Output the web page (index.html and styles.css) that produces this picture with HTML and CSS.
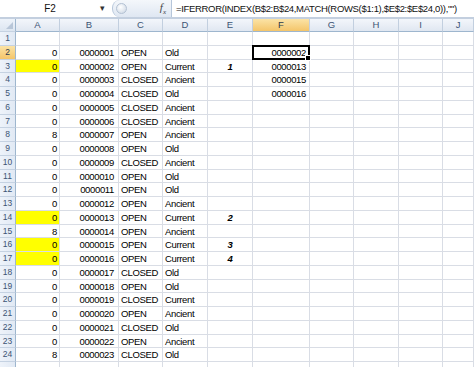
FILE: index.html
```html
<!DOCTYPE html>
<html>
<head>
<meta charset="utf-8">
<link rel="stylesheet" href="styles.css">
</head>
<body>
<div class="app">
  <div class="fbar">
    <div class="namebox">F2</div>
    <div class="dd">&#9662;</div>
    <div class="fxbtn"><span class="knob"></span><span class="fx"><i>f</i><sub>x</sub></span></div>
    <div class="formula">=IFERROR(INDEX(B$2:B$24,MATCH(ROWS($1:1),$E$2:$E$24,0)),"")</div>
  </div>
  <div class="sheet">
    <div class="row hdr"><span class="corner"></span><span>A</span><span>B</span><span>C</span><span>D</span><span>E</span><span class="sel">F</span><span>G</span><span>H</span><span>I</span><span>J</span></div>
    <div class="row"><span>1</span><span></span><span></span><span></span><span></span><span></span><span></span><span></span><span></span><span></span><span></span></div>
    <div class="row"><span class="sel">2</span><span>0</span><span>0000001</span><span>OPEN</span><span>Old</span><span></span><span class="active">0000002</span><span></span><span></span><span></span><span></span></div>
    <div class="row"><span>3</span><span class="hl">0</span><span>0000002</span><span>OPEN</span><span>Current</span><span>1</span><span>0000013</span><span></span><span></span><span></span><span></span></div>
    <div class="row"><span>4</span><span>0</span><span>0000003</span><span>CLOSED</span><span>Ancient</span><span></span><span>0000015</span><span></span><span></span><span></span><span></span></div>
    <div class="row"><span>5</span><span>0</span><span>0000004</span><span>CLOSED</span><span>Old</span><span></span><span>0000016</span><span></span><span></span><span></span><span></span></div>
    <div class="row"><span>6</span><span>0</span><span>0000005</span><span>CLOSED</span><span>Ancient</span><span></span><span></span><span></span><span></span><span></span><span></span></div>
    <div class="row"><span>7</span><span>0</span><span>0000006</span><span>CLOSED</span><span>Ancient</span><span></span><span></span><span></span><span></span><span></span><span></span></div>
    <div class="row"><span>8</span><span>8</span><span>0000007</span><span>OPEN</span><span>Ancient</span><span></span><span></span><span></span><span></span><span></span><span></span></div>
    <div class="row"><span>9</span><span>0</span><span>0000008</span><span>OPEN</span><span>Old</span><span></span><span></span><span></span><span></span><span></span><span></span></div>
    <div class="row"><span>10</span><span>0</span><span>0000009</span><span>CLOSED</span><span>Ancient</span><span></span><span></span><span></span><span></span><span></span><span></span></div>
    <div class="row"><span>11</span><span>0</span><span>0000010</span><span>OPEN</span><span>Old</span><span></span><span></span><span></span><span></span><span></span><span></span></div>
    <div class="row"><span>12</span><span>0</span><span>0000011</span><span>OPEN</span><span>Old</span><span></span><span></span><span></span><span></span><span></span><span></span></div>
    <div class="row"><span>13</span><span>0</span><span>0000012</span><span>OPEN</span><span>Ancient</span><span></span><span></span><span></span><span></span><span></span><span></span></div>
    <div class="row"><span>14</span><span class="hl">0</span><span>0000013</span><span>OPEN</span><span>Current</span><span>2</span><span></span><span></span><span></span><span></span><span></span></div>
    <div class="row"><span>15</span><span>8</span><span>0000014</span><span>OPEN</span><span>Ancient</span><span></span><span></span><span></span><span></span><span></span><span></span></div>
    <div class="row"><span>16</span><span class="hl">0</span><span>0000015</span><span>OPEN</span><span>Current</span><span>3</span><span></span><span></span><span></span><span></span><span></span></div>
    <div class="row"><span>17</span><span class="hl">0</span><span>0000016</span><span>OPEN</span><span>Current</span><span>4</span><span></span><span></span><span></span><span></span><span></span></div>
    <div class="row"><span>18</span><span>0</span><span>0000017</span><span>CLOSED</span><span>Old</span><span></span><span></span><span></span><span></span><span></span><span></span></div>
    <div class="row"><span>19</span><span>0</span><span>0000018</span><span>OPEN</span><span>Old</span><span></span><span></span><span></span><span></span><span></span><span></span></div>
    <div class="row"><span>20</span><span>0</span><span>0000019</span><span>CLOSED</span><span>Current</span><span></span><span></span><span></span><span></span><span></span><span></span></div>
    <div class="row"><span>21</span><span>0</span><span>0000020</span><span>OPEN</span><span>Ancient</span><span></span><span></span><span></span><span></span><span></span><span></span></div>
    <div class="row"><span>22</span><span>0</span><span>0000021</span><span>CLOSED</span><span>Old</span><span></span><span></span><span></span><span></span><span></span><span></span></div>
    <div class="row"><span>23</span><span>0</span><span>0000022</span><span>OPEN</span><span>Ancient</span><span></span><span></span><span></span><span></span><span></span><span></span></div>
    <div class="row"><span>24</span><span>8</span><span>0000023</span><span>CLOSED</span><span>Old</span><span></span><span></span><span></span><span></span><span></span><span></span></div>
    <div class="row"><span></span><span></span><span></span><span></span><span></span><span></span><span></span><span></span><span></span><span></span><span></span></div>
  </div>
</div>
</body>
</html>
```
FILE: styles.css
```css
html, body {
  margin: 0;
  padding: 0;
  background: #ffffff;
  overflow: hidden;
}
.app {
  width: 474px;
  height: 367px;
  overflow: hidden;
  font-family: "Liberation Sans", Arial, sans-serif;
  font-size: 9.5px;
  letter-spacing: -0.35px;
  color: #000;
}
.fbar {
  height: 17px;
  display: flex;
  align-items: stretch;
  background: #ffffff;
  border-bottom: 2px solid #c3cfdf;
  box-sizing: content-box;
  letter-spacing: 0;
}
.namebox {
  flex: 0 0 100px;
  text-align: center;
  line-height: 17px;
  font-size: 10px;
  color: #111;
}
.dd {
  flex: 0 0 12px;
  line-height: 17px;
  font-size: 9px;
  color: #333;
}
.fxbtn {
  flex: 0 0 60px;
  display: flex;
  align-items: center;
  justify-content: space-between;
  background: linear-gradient(#f4f7fb, #dfe7f2);
  border-left: 1px solid #b6c6da;
  border-right: 1px solid #b6c6da;
  border-radius: 8px 0 0 8px;
  padding: 0 5px 0 3px;
  box-sizing: border-box;
}
.knob {
  width: 9px;
  height: 9px;
  border-radius: 50%;
  background: radial-gradient(circle at 40% 35%, #ffffff, #c9d4e2);
  border: 1px solid #b3c1d3;
}
.fx {
  font-family: "Liberation Serif", serif;
  font-size: 11px;
  color: #444;
}
.fx sub {
  font-size: 7px;
  font-style: italic;
}
.formula {
  flex: 1 1 auto;
  min-width: 0;
  overflow: hidden;
  padding-left: 4px;
  line-height: 17px;
  font-size: 9.5px;
  letter-spacing: -0.33px;
  white-space: nowrap;
  color: #111;
}
.row {
  display: grid;
  grid-template-columns: 16px 44px 59px 44px 45px 45px 57px 44px 45px 44px 31px;
  height: 13.75px;
}
.row > span {
  box-sizing: border-box;
  border-right: 1px solid #d9dde5;
  border-bottom: 1px solid #d9dde5;
  line-height: 13px;
  white-space: nowrap;
  overflow: hidden;
  position: relative;
}
.row > span:nth-child(1) {
  background: linear-gradient(90deg, #eef3fa, #e1e9f4);
  border-right: 1px solid #9eb6ce;
  border-bottom: 1px solid #c5d2e2;
  color: #3c5474;
  text-align: center;
  font-size: 8.5px;
  letter-spacing: 0;
}
.row > span:nth-child(2) { text-align: right; padding-right: 2px; }
.row > span:nth-child(3) { text-align: right; padding-right: 4px; }
.row > span:nth-child(4),
.row > span:nth-child(5) { padding-left: 2px; }
.row > span:nth-child(6) { text-align: center; font-weight: bold; font-style: italic; }
.row > span:nth-child(7) { text-align: right; padding-right: 3px; }
.row > span.hl { background: #ffff00; }
.hdr { height: 13px; }
.hdr > span {
  background: linear-gradient(#f3f6fb, #e0e7f1);
  border-right: 1px solid #c2cfdf;
  border-bottom: 1px solid #9eb6ce;
  color: #3c5474;
  text-align: center !important;
  font-weight: normal !important;
  font-style: normal !important;
  padding: 0 !important;
  line-height: 12px;
  letter-spacing: 0;
}
.hdr > span.corner {
  background: linear-gradient(#eef3fa, #dde6f1);
  border-right: 1px solid #9eb6ce;
}
.corner::after {
  content: "";
  position: absolute;
  right: 2px;
  bottom: 2px;
  width: 0;
  height: 0;
  border-left: 7px solid transparent;
  border-bottom: 7px solid #b8c6d8;
}
.row > span.sel {
  background: linear-gradient(#fbe3a6, #f4c56a);
  color: #2d3a4d;
}
.hdr > span.sel {
  background: linear-gradient(#fbe3a6, #f4c56a);
}
.active::after {
  content: "";
  position: absolute;
  left: -1px;
  top: -1px;
  right: -1px;
  bottom: -1px;
  border: 2px solid #000;
}
.active::before {
  content: "";
  position: absolute;
  right: -2px;
  bottom: -2px;
  width: 4px;
  height: 4px;
  background: #000;
  border: 1px solid #fff;
  z-index: 2;
}
.row > span.active { overflow: visible; }
```
